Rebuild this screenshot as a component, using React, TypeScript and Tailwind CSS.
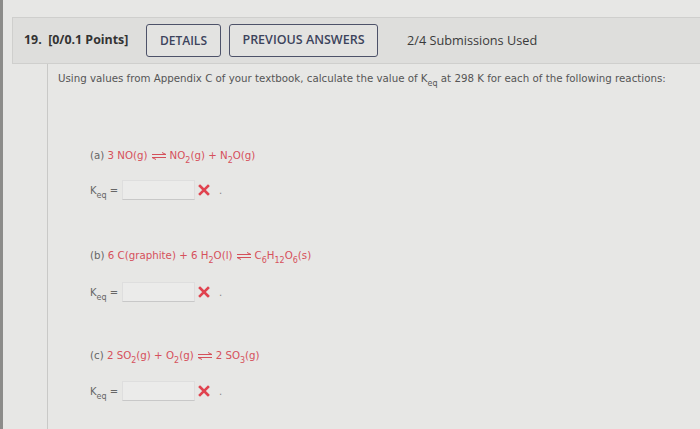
import React from "react";

const Arrow = () => (
  <svg width="16" height="8" viewBox="0 0 16 8" className="inline-block mx-[3px] align-middle">
    <path d="M1 2.5 H15 L11 0.5" fill="none" stroke="#d4505a" strokeWidth="1" />
    <path d="M15 5.5 H1 L5 7.5" fill="none" stroke="#d4505a" strokeWidth="1" />
  </svg>
);

const Answer = () => (
  <div className="flex items-center h-[22px] text-[10px] text-[#666]">
    <span className="w-[32px]">
      K<sub className="text-[8px] align-[-2px]">eq</sub> =
    </span>
    <div className="w-[73px] h-[20px] border border-[#dedede] border-b-[#c8c8c8] bg-[#ebebea]" />
    <svg width="12" height="12" viewBox="0 0 12 12" className="ml-[3px]">
      <path d="M2 2 L10 10 M10 2 L2 10" stroke="#e0434f" strokeWidth="2.6" strokeLinecap="square" />
    </svg>
    <span className="ml-[9px] text-[#888]">.</span>
  </div>
);

const S = ({ children }: { children: React.ReactNode }) => (
  <sub className="text-[8px] align-[-2px]">{children}</sub>
);

export default function App() {
  return (
    <div
      className="w-[700px] h-[429px] bg-[#e7e7e5] relative overflow-hidden flex"
      style={{ fontFamily: '"DejaVu Sans", Verdana, sans-serif' }}
    >
      <div className="w-[3px] bg-[#8c8c8a] h-full shrink-0" />
      <div className="flex-1 flex flex-col pl-[9px] pt-[17px]">
        <div
          className="h-[47px] shrink-0 bg-[#dededc] border border-[#cfcfcd] border-r-0 flex items-center pl-[11px]"
          style={{ fontFamily: '"Open Sans", sans-serif' }}
        >
          <span className="text-[12.4px] font-bold text-[#333] w-[122px] whitespace-nowrap">19.&nbsp; [0/0.1 Points]</span>
          <div className="w-[75px] h-[33px] border-[1.5px] border-[#4d5269] rounded-[3px] bg-[#e3e3e1] flex items-center justify-center text-[12px] text-[#3c435c] font-semibold">
            DETAILS
          </div>
          <div className="ml-[8px] w-[149px] h-[33px] border-[1.5px] border-[#4d5269] rounded-[3px] bg-[#e3e3e1] flex items-center justify-center text-[12.5px] text-[#3c435c] font-semibold whitespace-nowrap">
            PREVIOUS ANSWERS
          </div>
          <span className="ml-[29px] text-[12.7px] text-[#3a3a3a] whitespace-nowrap">2/4 Submissions Used</span>
        </div>
        <div className="flex-1 ml-[35px] border-l border-[#c9c9c7] pl-[10px] pt-[6px]">
          <div className="text-[10.25px] text-[#555] whitespace-nowrap leading-[16px]">
            Using values from Appendix C of your textbook, calculate the value of K
            <sub className="text-[8px] align-[-2px]">eq</sub> at 298 K for each of the following reactions:
          </div>

          <div className="ml-[32px] mt-[63px] text-[10.25px]">
            <div className="h-[14px] flex items-center whitespace-nowrap">
              <span className="text-[#666]">(a)&nbsp;</span>
              <span className="text-[#d6505b]">
                3 NO(g)
                <Arrow />
                NO<S>2</S>(g) + N<S>2</S>O(g)
              </span>
            </div>
            <div className="mt-[16px]">
              <Answer />
            </div>

            <div className="h-[14px] flex items-center mt-[48px] whitespace-nowrap">
              <span className="text-[#666]">(b)&nbsp;</span>
              <span className="text-[#d6505b]">
                6 C(graphite) + 6 H<S>2</S>O(l)
                <Arrow />
                C<S>6</S>H<S>12</S>O<S>6</S>(s)
              </span>
            </div>
            <div className="mt-[18px]">
              <Answer />
            </div>

            <div className="h-[14px] flex items-center mt-[46px] whitespace-nowrap">
              <span className="text-[#666]">(c)&nbsp;</span>
              <span className="text-[#d6505b]">
                2 SO<S>2</S>(g) + O<S>2</S>(g)
                <Arrow />
                2 SO<S>3</S>(g)
              </span>
            </div>
            <div className="mt-[17px]">
              <Answer />
            </div>
          </div>
        </div>
      </div>
    </div>
  );
}
